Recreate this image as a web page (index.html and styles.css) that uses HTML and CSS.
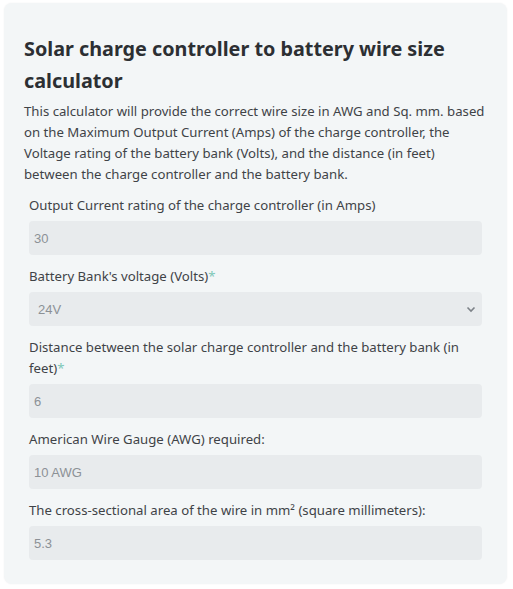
FILE: index.html
```html
<!DOCTYPE html>
<html lang="en">
<head>
    <meta charset="UTF-8">
    <meta name="viewport" content="width=device-width, initial-scale=1.0">
    <title>Solar charge controller to battery wire size calculator</title>
    <link rel="stylesheet" href="styles.css">
</head>
<body>
    <div class="calc">
        <h1>Solar charge controller to battery wire size calculator</h1>
        <p class="intro">This calculator will provide the correct wire size in AWG and Sq. mm. based on the Maximum Output Current (Amps) of the charge controller, the Voltage rating of the battery bank (Volts), and the distance (in feet) between the charge controller and the battery bank.</p>
        <div class="form">
            <div class="field">
                <label>Output Current rating of the charge controller (in Amps)</label>
                <div class="box">30</div>
            </div>
            <div class="field">
                <label>Battery Bank's voltage (Volts)<span class="req">*</span></label>
                <div class="box select">
                    <span>24V</span>
                    <svg width="10" height="7" viewBox="0 0 10 7"><path d="M1.5 1.5 L5 5 L8.5 1.5" fill="none" stroke="#7d8288" stroke-width="1.6"/></svg>
                </div>
            </div>
            <div class="field">
                <label>Distance between the solar charge controller and the battery bank (in feet)<span class="req">*</span></label>
                <div class="box">6</div>
            </div>
            <div class="field">
                <label>American Wire Gauge (AWG) required:</label>
                <div class="box">10 AWG</div>
            </div>
            <div class="field">
                <label>The cross-sectional area of the wire in mm² (square millimeters):</label>
                <div class="box">5.3</div>
            </div>
        </div>
    </div>
</body>
</html>
```

FILE: styles.css
```css
body {
    margin: 0;
    padding: 3px 6px 5px 4px;
    background: #ffffff;
    font-family: 'Noto Sans', sans-serif;
    color: #3a3d40;
}
.calc {
    background: #f3f6f7;
    border-radius: 8px;
    padding: 30px 20px 24px 20px;
    box-shadow: 0 0 2px rgba(0, 0, 0, 0.06);
}
h1 {
    margin: 0;
    font-size: 19.8px;
    line-height: 32px;
    font-weight: 700;
    color: #2c2f33;
}
.intro {
    margin: 4px 0 0;
    font-size: 13.2px;
    line-height: 21px;
    color: #3f4347;
}
.form {
    padding: 0 5px;
}
.field label {
    display: block;
    margin-top: 10px;
    font-size: 13.2px;
    line-height: 21px;
    color: #3f4347;
}
.field + .field label {
    margin-top: 11px;
}
.req {
    color: #7ec8b8;
}
.box {
    margin-top: 5px;
    height: 34px;
    box-sizing: border-box;
    padding: 0 5px;
    background: #e8ebed;
    border-radius: 4px;
    display: flex;
    align-items: center;
    font-family: 'Liberation Sans', Arial, sans-serif;
    font-size: 13px;
    color: #8c9196;
}
.select {
    justify-content: space-between;
    padding: 0 6px 0 9px;
}
```
